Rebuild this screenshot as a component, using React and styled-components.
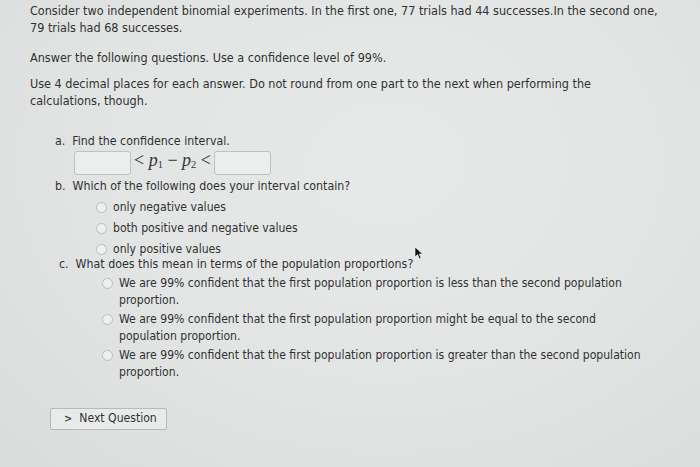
import React from "react";
import styled, { createGlobalStyle } from "styled-components";

const GlobalStyle = createGlobalStyle`
  html, body {
    margin: 0;
    padding: 0;
    background: #e3e5e4;
  }
  body {
    font-family: "DejaVu Sans Condensed", "DejaVu Sans", sans-serif;
    color: #303232;
  }
`;

const Page = styled.div`
  position: relative;
  width: 700px;
  height: 467px;
  overflow: hidden;
  box-sizing: border-box;
  padding: 2px 0 0 30px;
  background: radial-gradient(ellipse at 55% 35%, #e7e9e8 0%, #e3e5e4 50%, #dadcdb 100%);
  font-size: 12.5px;
  line-height: 17px;
`;

const Para = styled.p`
  margin: ${(p) => p.$top || 0}px 0 0 0;
  width: ${(p) => p.$width || 640}px;
`;

const Part = styled.div`
  margin: ${(p) => p.$top || 0}px 0 0 ${(p) => p.$indent || 25}px;
  font-size: 12.3px;
`;

const Label = styled.div`
  white-space: nowrap;
`;

const IntervalRow = styled.div`
  display: flex;
  align-items: center;
  gap: 3px;
  margin: 0 0 0 19px;
  height: 24px;
  padding-top: 0.5px;
`;

const AnswerBox = styled.div`
  width: 55px;
  height: 22px;
  border: 1px solid #bcc3c3;
  border-radius: 3px;
  background: #eceeed;
`;

const MathText = styled.span`
  font-family: "Liberation Serif", "DejaVu Serif", serif;
  font-size: 18px;
  color: #343636;
  white-space: nowrap;
  i {
    font-style: italic;
  }
  sub {
    font-size: 10.5px;
    vertical-align: -2px;
    font-style: normal;
  }
`;

const Options = styled.div`
  display: flex;
  flex-direction: column;
  gap: ${(p) => p.$gap || 4}px;
  margin: ${(p) => p.$top || 0}px 0 0 ${(p) => p.$indent || 40}px;
  font-size: 12.1px;
`;

const Option = styled.label`
  display: flex;
  align-items: flex-start;
  gap: ${(p) => p.$space || 6}px;
  width: ${(p) => p.$width || 560}px;
`;

const Radio = styled.span`
  flex: none;
  width: 9px;
  height: 9px;
  margin-top: 3px;
  border-radius: 50%;
  border: 1px solid #b9c0c0;
  background: #eef0ef;
`;

const Button = styled.button`
  display: flex;
  align-items: center;
  gap: 7px;
  margin: 27px 0 0 20px;
  height: 22px;
  width: 117px;
  padding: 0 0 0 13px;
  box-sizing: border-box;
  border: 1px solid #b5baba;
  border-radius: 2px;
  background: #e9ebea;
  font: inherit;
  color: #303232;
  font-size: 12.1px;
`;

const Chevron = styled.span`
  font-size: 11px;
  font-weight: bold;
  color: #4a4c4c;
`;

const Cursor = styled.svg`
  position: absolute;
  left: 414px;
  top: 246px;
`;

export default function App() {
  return (
    <>
      <GlobalStyle />
      <Page>
        <Para>
          Consider two independent binomial experiments. In the first one, 77 trials had 44 successes.In the second one, 79 trials had 68 successes.
        </Para>
        <Para $top={13}>Answer the following questions. Use a confidence level of 99%.</Para>
        <Para $top={9} $width={600}>
          Use 4 decimal places for each answer. Do not round from one part to the next when performing the calculations, though.
        </Para>

        <Part $top={24}>
          <Label>a.&nbsp; Find the confidence interval.</Label>
          <IntervalRow>
            <AnswerBox />
            <MathText>
              &lt; <i>p</i><sub>1</sub> − <i>p</i><sub>2</sub> &lt;
            </MathText>
            <AnswerBox />
          </IntervalRow>
        </Part>

        <Part $top={3}>
          <Label>b.&nbsp; Which of the following does your interval contain?</Label>
          <Options $top={4} $gap={4} $indent={41}>
            <Option $width={300}>
              <Radio />
              <span>only negative values</span>
            </Option>
            <Option $width={300}>
              <Radio />
              <span>both positive and negative values</span>
            </Option>
            <Option $width={300}>
              <Radio />
              <span>only positive values</span>
            </Option>
          </Options>
        </Part>

        <Part $top={-2} $indent={29}>
          <Label>c.&nbsp; What does this mean in terms of the population proportions?</Label>
          <Options $top={2} $gap={2} $indent={43}>
            <Option $width={530}>
              <Radio />
              <span>
                We are 99% confident that the first population proportion is less than the second population proportion.
              </span>
            </Option>
            <Option $width={500}>
              <Radio />
              <span>
                We are 99% confident that the first population proportion might be equal to the second population proportion.
              </span>
            </Option>
            <Option $width={545}>
              <Radio />
              <span>
                We are 99% confident that the first population proportion is greater than the second population proportion.
              </span>
            </Option>
          </Options>
        </Part>

        <Button>
          <Chevron>&gt;</Chevron>
          Next Question
        </Button>

        <Cursor width="10" height="14" viewBox="0 0 10 14">
          <path d="M1 1 L1 11 L3.5 8.6 L5.4 12.8 L7 12 L5.2 8 L8.6 8 Z" fill="#111" stroke="#fff" strokeWidth="0.6" />
        </Cursor>
      </Page>
    </>
  );
}
